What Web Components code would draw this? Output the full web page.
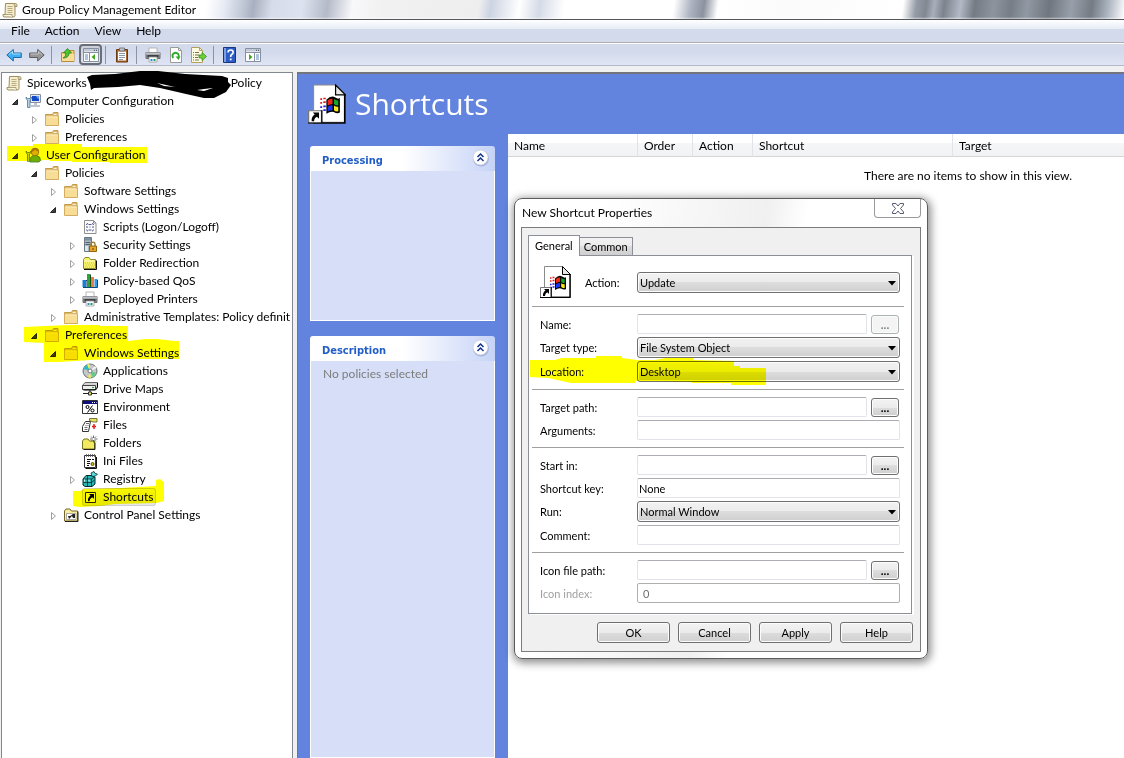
<!DOCTYPE html>
<html lang="en">
<head>
<meta charset="utf-8">
<title>Group Policy Management Editor</title>
<style>
html, body {
  height: 100%;
}
body {
  margin: 0;
  overflow: hidden;
  position: relative;
  background: #f0f0f0;
  color: #000;
  font-family: Lato, "Open Sans", sans-serif;
  font-size: 12px;
  line-height: 18px;
}
</style>
</head>
<body>
<policy-editor></policy-editor>
<shortcut-dialog></shortcut-dialog>
<pen-marks></pen-marks>

<script>
// 16x16 unless a viewBox is given
const FOLDER = `
  <path d="M1.500 3.500h7l1-2h4.500v12h-12.500z" fill="#f0cd78" stroke="#c39a48"/>
  <path d="M9.500 2.500h3.500v2h-4z" fill="#fff6d8" stroke="#c9a557" stroke-width=".6"/>
  <path d="M1.500 5h13v9.500h-13z" fill="#f7dd95" stroke="#d3ad62"/>
  <path d="M2.500 6h11" stroke="#fdf0c4"/>`;

const PRINTER = `
  <path d="M4 1h8v5h-8z" fill="#fff" stroke="#a8a8a8" stroke-width=".8"/>
  <path d="M1 5.500h14v6h-14z" fill="#8c8f94" stroke="#6b6d70"/>
  <path d="M1 5.500h14v2h-14z" fill="#bfc1c4"/>
  <path d="M2.500 8h11v2.500h-11z" fill="#3e4044"/>
  <path d="M4 10h8v5h-8z" fill="#fff" stroke="#999" stroke-width=".8"/>
  <path d="M5.500 12h2v2h-2z" fill="#2b8fd6"/><path d="M8.500 12h2v2h-2z" fill="#1c9a58"/>`;

const SCROLL = `
  <path d="M3.500 1.500h10q2 0 1.500 3h-2v9q0 1.500-2 1.500h-9q-1.500-.5-1-2.500h2z" fill="#f5edcb" stroke="#9c8f66"/>
  <path d="M13 1.500q-1.500 1-.5 3h2.500" fill="#d8caa0" stroke="#9c8f66" stroke-width=".8"/>
  <path d="M1.500 12.500h8.500q-.5 2 1 2.500" fill="#fffbe6" stroke="#9c8f66" stroke-width=".8"/>
  <path d="M5.500 4.500h5M5.500 6.500h5M5.500 8.500h5M5.500 10.500h5" stroke="#a89a72" stroke-width=".8"/>`;

const ICONS = {
  scroll: SCROLL,
  folder: FOLDER,
  printer: PRINTER,
  computer: `
    <path d="M5.500 1.500h10v8h-10z" fill="#e4e7ec" stroke="#8a919e"/>
    <path d="M7 3h7v5h-7z" fill="#1449c8"/><path d="M11 3h3v3q-2 0-3-3z" fill="#6d9bf0"/>
    <path d="M9 10h3v2h3v2h-9v-2h3z" fill="#bcc3d2"/>
    <path d="M1 4q0 3 1.500 3v7.500h2.500v-7.500q1.500 0 1.500-3l-1.500 1.500h-2.500z" fill="#b7d3ea" stroke="#4d7698" stroke-width=".8"/>`,
  user: `
    <path d="M5 15q-.5-6 4-6.500h2.500q4 .5 4 5l-1.500 1.500z" fill="#6fae2c" stroke="#3f7a18" stroke-width=".8"/>
    <circle cx="10" cy="5" r="3.800" fill="#e0b05c" stroke="#96682a" stroke-width=".8"/>
    <path d="M6.200 5q0-4 4-4 3.500 0 3.800 3.500-3-.5-4-2-1 2-3.800 2.500z" fill="#a87322"/>
    <path d="M1 4q0 3 1.500 3v7.500h2v-7.500q1.500 0 1.500-3l-1.500 1.500h-2z" fill="#c9cfb0" stroke="#6a7448" stroke-width=".8"/>`,
  script: `
    <path d="M2.500 1.500h9l2.500 2.500v10.500h-11.500z" fill="#fbfbfb" stroke="#8e8e8e"/>
    <path d="M11.500 1.500v2.500h2.500" fill="none" stroke="#8e8e8e"/>
    <path d="M6 4.500q-1.500 0-1.500 1.500M10 4.500q1.500 0 1.500 1.500M4 8h2M7.500 8h1M10 8h2M6 12q-1.500 0-1.500-1.500M10 12q1.500 0 1.500-1.500M6.500 5.500h3M6.500 11h3" fill="none" stroke="#51548a"/>`,
  security: `
    <path d="M2.500.5h7v14h-7z" fill="#aab6c2" stroke="#6c7884"/>
    <path d="M3 1h6v2.500h-6z" fill="#7f909e"/><path d="M3.500 5.500h5M3.500 7.500h5" stroke="#55636f"/><path d="M3 9h3v5h-3z" fill="#dbe5ec"/>
    <path d="M9 9v-2q0-1.800 2-1.800t2 1.800v2" fill="none" stroke="#9a8338" stroke-width="1.400"/>
    <path d="M7.500 9h7v5.500h-7z" fill="#e3a52c" stroke="#96640d"/><path d="M10.500 11h1v2h-1z" fill="#6b4403"/>`,
  redirect: `
    <path d="M1.500 4.500l1.500-2h4l1.500 2h5v9h-12z" fill="#f6f06a" stroke="#8a8a30"/>
    <path d="M2 6h11" stroke="#fffcc0"/>
    <path d="M3 8h1m1 0h1m1 0h1m1 0h1m1 0h1M4 10h1m1 0h1m1 0h1m1 0h1m1 0h1M3 12h1m1 0h1m1 0h1m1 0h1m1 0h1" stroke="#cfc640"/>
    <path d="M2 14.500h12.500v-9" fill="none" stroke="#111"/>`,
  qos: `
    <path d="M.500 7h3.500v7h-3.500z" fill="#1a7ed8"/><path d="M4 7.500h1v7h-4" fill="none" stroke="#0a3c6c"/>
    <path d="M5 1h3v13h-3z" fill="#2ea33a"/><path d="M8.500 1.500v13" stroke="#125318"/>
    <path d="M9 4h3v10h-3z" fill="#ef7a4a"/>
    <path d="M12.500 6h3v8h-3z" fill="#2a9be6"/><path d="M15.500 7v7.500h-14" fill="none" stroke="#0b4a7c"/>`,
  cd: `
    <circle cx="8" cy="8" r="7" fill="#c4c8cb" stroke="#6c7072"/>
    <path d="M8 8l-6.500-2q1-3.500 4-4.500z" fill="#29bcc0"/><path d="M8 8l-3-6.500 2.500-.5z" fill="#f5ef5a"/>
    <path d="M8 8l6.500 2q-1 3.500-4 4.500z" fill="#66c88f"/><path d="M8 8l1 7-3-.5z" fill="#f2e758"/><path d="M8 8l6.500-3-1.500-2z" fill="#f6f6f6"/>
    <circle cx="8" cy="8" r="2" fill="#fff" stroke="#777"/>`,
  drive: `
    <path d="M.500 4.500l2.500-3h12.500v4l-2 3h-13z" fill="#d4d4d4" stroke="#666"/>
    <path d="M.500 4.500h13v4h-13z" fill="#eee" stroke="#444"/><path d="M10 6.500h2" stroke="#18b018"/>
    <path d="M15.500 2v4.500l-2 2.500h-12" fill="none" stroke="#000"/>
    <path d="M8 9v3M1 12.500h14" stroke="#222"/><path d="M6.500 11h3v3h-3z" fill="#efe63c" stroke="#333"/>`,
  environment: `
    <path d="M.500 1.500h15v13h-15z" fill="#fff" stroke="#333"/>
    <path d="M1 2h14v3h-14z" fill="#10107c"/><path d="M10 3.500h1m1 0h1m1 0h.5" stroke="#fff"/>
    <circle cx="5.500" cy="8" r="1.500" fill="none" stroke="#000"/><circle cx="10.500" cy="11.500" r="1.500" fill="none" stroke="#000"/><path d="M10.500 6.500l-5 7" stroke="#000"/>`,
  files: `
    <path d="M.500 14.500v-5l3-5h5l-2 10z" fill="#fff" stroke="#333"/>
    <path d="M4 6.500h3M3.500 8.500h1m1 0h1M2.500 10.500h3M2.500 12.500h3" stroke="#444" stroke-width=".8"/>
    <path d="M7.500 1.500h7.500v3.500h-4l-3.500-1.500z" fill="#e9e06a" stroke="#55551a" stroke-width=".8"/>
    <path d="M12 7v5M10 9.500h4" stroke="#e01818" stroke-width="1.400"/>`,
  folders: `
    <path d="M.500 6l1.500-2h4l1.500 2h5v8h-12z" fill="#f3ea62" stroke="#77771c"/>
    <path d="M1.500 14.500h11.500v-7" fill="none" stroke="#222"/>
    <path d="M11.500.5v7M8 4h7.500M9 1.500l5 5M14 1.500l-5 5" stroke="#444" stroke-width=".8"/><path d="M10.500 3h2v2h-2z" fill="#fff"/>`,
  ini: `
    <path d="M2.500 2.500h11v12h-11z" fill="#fff" stroke="#333"/>
    <path d="M4.500 1v3M6.500 1v3M8.500 1v3M10.500 1v3M12.500 1v3" stroke="#555" stroke-width=".8"/>
    <path d="M5 6.500h4m1 0h2M5 8.500h3M5 10.500h3M5 12.500h2" stroke="#111"/><circle cx="10.500" cy="11" r="1.500" fill="#c9b624" stroke="#5c5108"/>
    <path d="M14.500 4v11.500h-11" fill="none" stroke="#111"/>`,
  registry: `
    <path d="M1 8l3-3.500h5l4 1.500v7l-3 2.500h-7l-2-1.500z" fill="#28b5b5" stroke="#042c2c"/>
    <path d="M1.500 8h8v7M9.500 8l3-2M5.500 5v10M1.500 11.500h8l3-2.500" fill="none" stroke="#042c2c" stroke-width=".8"/>
    <path d="M9 2l3-1.500 1 2 2.500.5-2 2-3.500.5z" fill="#5fe0e0" stroke="#042c2c" stroke-width=".8"/><path d="M2 8.500h1v2h-1M6.500 8.500h1v2h-1" fill="#d9ffff"/>`,
  shortcut: `
    <path d="M3.500 3.500h10v10h-10z" fill="#fff" stroke="#222"/>
    <path d="M7 5h5v5l-1.700-1.700q-2.800 1.500-2.800 4h-1.500q-.5-3.500 2.500-5.800z" fill="#000"/>`,
  control: `
    <path d="M1.500 4l1.500-2h4l1.500 2h6v10h-13z" fill="#f6eea0" stroke="#77662a"/>
    <path d="M3.500 6.500h9.500v6h-9.500z" fill="#fff" stroke="#999" stroke-width=".8"/><path d="M5 9h2l3-2h2v4h-2l-1-2-3 3z" fill="#222"/><path d="M8 8h1v1h-1z" fill="#d22"/>
    <path d="M2 14.500h13v-10" fill="none" stroke="#222"/>`,
  back: `<path d="M.800 8l6.500-5.500v3.500h8v4.500h-8v3.500z" fill="#3eaef0" stroke="#1b6cae" stroke-linejoin="round"/><path d="M3 7.500l3.500-3v2.500h8" fill="none" stroke="#a5dcfb"/>`,
  forward: `<path d="M15.200 8l-6.500-5.500v3.500h-8v4.500h8v3.500z" fill="#979797" stroke="#5c5c5c" stroke-linejoin="round"/><path d="M1.500 7h8v-2.500l3.500 3" fill="none" stroke="#c6c6c6"/>`,
  up: `
    <path d="M1.500 5.500h5l1-2h6.500v11h-12.500z" fill="#f3cf7a" stroke="#b78d3c"/><path d="M2 7h12v7h-12z" fill="#f9de97"/>
    <path d="M3 11q3-1 3-5h-2.500l4-4.500 4 4.500h-2.500q0 5-6 5z" fill="#4fc72c" stroke="#23821a" stroke-width=".8"/>`,
  pane: `
    <path d="M.500 1.500h15v13h-15z" fill="#fff" stroke="#8590a0"/><path d="M1 2h14v2.500h-14z" fill="#c3cad6"/><path d="M11 3.300h1m1 0h1" stroke="#3c4a5e"/>
    <path d="M1 5.500h14M6.500 6v8.500" stroke="#8590a0"/><path d="M2 8h3M2 10h3M2 12h3" stroke="#5f87c0"/><path d="M12 7v6l-3.500-3z" fill="#42a822"/>`,
  pane2: `
    <path d="M.500 1.500h15v13h-15z" fill="#fff" stroke="#8590a0"/><path d="M1 2h14v2.500h-14z" fill="#c3cad6"/><path d="M11 3.300h1m1 0h1" stroke="#3c4a5e"/>
    <path d="M1 5.500h14M9.500 6v8.500" stroke="#8590a0"/><path d="M11 8h3M11 10h3M11 12h3" stroke="#5f87c0"/><path d="M4 7v6l3.500-3z" fill="#42a822"/>`,
  clipboard: `
    <path d="M2.500 2.500h11v12.500h-11z" fill="#a8642a" stroke="#6c3a10"/><path d="M4 4.500h8v9h-8z" fill="#fff"/>
    <path d="M5.500 1h5v3h-5z" fill="#c0c4c8" stroke="#666" stroke-width=".8"/><path d="M5 6.500h6M5 8.500h6M5 10.500h6M5 12.500h4" stroke="#8c98a8"/>`,
  refresh: `
    <path d="M2.500.5h8l3 3v12h-11z" fill="#fff" stroke="#9a9a9a"/><path d="M10.500.5v3h3" fill="none" stroke="#9a9a9a"/>
    <path d="M5.300 11q-1.800-2.500.2-4.500 2.500-1.700 4.700.5.800 1.200.5 3" fill="none" stroke="#2fa82c" stroke-width="1.800"/><path d="M7.500 9.500h5l-2 3.500z" fill="#2fa82c"/>`,
  export: `
    <path d="M.500.5h8l3 3v12h-11z" fill="#fffbe2" stroke="#b3a05c"/><path d="M8.500.5v3h3" fill="none" stroke="#b3a05c"/>
    <path d="M2 5.500h1m1 0h4M2 8h1m1 0h4M2 10.500h1m1 0h3M2 13h1m1 0h4" stroke="#77715a"/><path d="M8 8h3v-2.500l4.500 4-4.500 4v-2.500h-3z" fill="#6fd03c" stroke="#2c9018" stroke-width=".8"/>`,
  help: `
    <path d="M1.500.5h12v15h-12z" fill="#2d5cc4" stroke="#18367c"/><path d="M2 1h2v14h-2z" fill="#7f9fe0"/>
    <path d="M6 5.500q0-2.500 2.700-2.500 2.500 0 2.500 2.300 0 1.400-1.500 2.200-1 .6-1 1.800v.7" fill="none" stroke="#fff" stroke-width="1.600"/><path d="M7.800 11.500h1.800v1.800h-1.800z" fill="#fff"/>`,
  document: `
    <path d="M4.500.5h18l8 8v22.500h-26z" fill="#fff" stroke="#8a8a8a"/>
    <path d="M30 8v23.500h-26" fill="none" stroke="#000" stroke-width="1.400"/>
    <path d="M22.500.5v8h8z" fill="#e8e8e8" stroke="#000"/>
    <path d="M10 12h1.500M10 15h1.500M12.500 11.500h2M12.500 14.500h2" stroke="#e02020" stroke-width="1.400"/><path d="M10 18.500h1.500M10 21.500h1.500M12.500 18h2M12.500 21h2" stroke="#2020e0" stroke-width="1.400"/>
    <path d="M15 12.500q4-4 7-2t4 .5v12q-2 1.400-5-.5-2.500-.8-6 1.500z" fill="#000"/>
    <path d="M16 13q2-1.700 4-1.300v4.300q-2 0-4 1.300z" fill="#f02818"/><path d="M21.200 12q2 1.500 3.500 1v4q-2 .5-3.500-1z" fill="#18a828"/>
    <path d="M16 18.200q2-1.500 4-1.200v4q-2 0-4 1.200z" fill="#1838f0"/><path d="M21.200 17.200q2 1.300 3.500 1v3.800q-2 .5-3.500-1z" fill="#f8e818"/>
    <path d="M.500 21.500h10.500v10h-10.500z" fill="#fff" stroke="#777"/><path d="M11.300 21v10.500h-11.300" fill="none" stroke="#000"/>
    <path d="M4 23h5v5l-1.700-1.700q-2.300 1-2.300 3.700h-2q-.5-3.500 2.500-5.500z" fill="#000"/>`
};

class GpIcon extends HTMLElement {
  constructor() {
    super();
    this.attachShadow({ mode: 'open' });
  }

  connectedCallback() {
    const name = this.getAttribute('name');
    const box = name === 'document' ? '0 0 31 32' : '0 0 16 16';
    this.shadowRoot.innerHTML = `
      <style>
        :host { display: block; flex: none; width: 16px; height: 16px; }
        svg { display: block; width: 100%; height: 100%; }
      </style>
      <svg viewBox="${box}" aria-hidden="true">${ICONS[name]}</svg>
    `;
  }
}
customElements.define('gp-icon', GpIcon);

class TitleBar extends HTMLElement {
  constructor() {
    super();
    this.attachShadow({ mode: 'open' });
    this.shadowRoot.innerHTML = `
      <style>
        :host {
          display: flex;
          align-items: center;
          gap: 4px;
          height: 19px;
          padding-left: 2px;
          border-bottom: 1px solid #55555c;
          /* blurred desktop showing through the glass */
          background:
            linear-gradient(#fff0 17px, #ffffff90 19px),
            linear-gradient(98deg, #fff 0, #fff 205px, #e8ecf5 222px, #c3cad8 240px, #a9b0bf 252px, #d6dce9 270px,
              #dce2ee 300px, #b4bac8 325px, #f8f8fb 350px, #f1f1f1 380px, #eeeeee 475px, #ccd3e2 487px, #fff 515px,
              #d5dbe7 535px, #fff 560px, #fff 668px, #adb4c2 685px, #8c929e 698px, #fff 712px, #fbfbfb 780px, #fff 895px,
              #959ca7 908px, #818892 918px, #a7afbb 926px, #7c838d 936px, #b2bac6 952px, #747b84 966px, #8c949e 985px,
              #767d86 1002px, #9098a3 1018px, #70767e 1040px, #979faa 1062px, #747b84 1082px, #aab3bf 1098px, #fff 1116px);
        }
        h1 { margin: 0; font-size: 12px; font-weight: normal; line-height: 18px; }
      </style>
      <gp-icon name="scroll"></gp-icon>
      <h1><slot></slot></h1>
    `;
  }
}
customElements.define('title-bar', TitleBar);

class MenuBar extends HTMLElement {
  constructor() {
    super();
    this.attachShadow({ mode: 'open' });
    this.shadowRoot.innerHTML = `
      <style>
        :host {
          display: flex;
          height: 22px;
          padding-left: 3px;
          border-bottom: 1px solid #b0aeb2;
          background: linear-gradient(#fff 0, #e6ecf5 9px, #d3daec 9px);
        }
        button {
          border: 0;
          padding: 0 7px 0 8px;
          background: none;
          font: inherit;
          color: inherit;
        }
      </style>
      <button type="button">File</button>
      <button type="button">Action</button>
      <button type="button">View</button>
      <button type="button">Help</button>
    `;
  }
}
customElements.define('menu-bar', MenuBar);

class ToolBar extends HTMLElement {
  constructor() {
    super();
    this.attachShadow({ mode: 'open' });
    const groups = [
      [['back', 'Back'], ['forward', 'Forward']],
      [['up', 'Up one level'], ['pane', 'Show/Hide Console Tree', true]],
      [['clipboard', 'Paste']],
      [['printer', 'Print'], ['refresh', 'Refresh'], ['export', 'Export List']],
      [['help', 'Help'], ['pane2', 'Show/Hide Action Pane']]
    ];
    this.shadowRoot.innerHTML = `
      <style>
        :host {
          display: flex;
          align-items: center;
          height: 21px;
          padding-left: 2px;
          border-top: 1px solid #fff;
          border-bottom: 1px solid #b3b8ca;
          background: linear-gradient(#d3daec 40%, #dfe5f4);
        }
        button {
          box-sizing: border-box;
          display: flex;
          align-items: center;
          justify-content: center;
          width: 23px;
          height: 21px;
          padding: 0;
          border: 1px solid transparent;
          border-radius: 4px;
          background: none;
        }
        button[aria-pressed] {
          border: 2px solid #6a6e78;
          background: linear-gradient(#c9ced9, #e4e8f0);
        }
        i { width: 1px; height: 18px; margin: 0 4px 0 3px; background: #8d93a3; }
      </style>
      ${groups.map(g => g.map(([icon, label, on]) => `
        <button type="button" aria-label="${label}"${on ? ' aria-pressed="true"' : ''}><gp-icon name="${icon}"></gp-icon></button>
      `).join('')).join('<i></i>')}
    `;
  }
}
customElements.define('tool-bar', ToolBar);

class TreeNode extends HTMLElement {
  constructor() {
    super();
    this.attachShadow({ mode: 'open' });
  }

  connectedCallback() {
    const level = Number(this.getAttribute('level'));
    const state = this.getAttribute('state');
    let arrow = '';
    if (state === 'open') arrow = '<path d="M8.500 6.500v5h-5z" fill="#404040" stroke="#262626"/>';
    if (state === 'closed') arrow = '<path d="M4.500 5.500l4 3.500-4 3.500z" fill="#fff" stroke="#a0a0a0"/>';
    this.shadowRoot.innerHTML = `
      <style>
        :host {
          display: flex;
          align-items: center;
          height: 18px;
          padding-left: ${level ? level * 19 - 12 : 4}px;
          white-space: nowrap;
        }
        svg { flex: none; width: 16px; height: 16px; }
        .item { display: flex; align-items: center; gap: 5px; height: 18px; }
        :host([selected]) .item {
          padding-right: 3px;
          border-radius: 3px;
          background: linear-gradient(#f8f8f8, #e5e5e5);
          box-shadow: inset 0 0 0 1px #d0d0d0;
        }
      </style>
      ${level ? `<svg viewBox="0 0 16 16" aria-hidden="true">${arrow}</svg>` : ''}
      <span class="item"><gp-icon name="${this.getAttribute('icon')}"></gp-icon><span><slot></slot></span></span>
    `;
  }
}
customElements.define('tree-node', TreeNode);

class ConsoleTree extends HTMLElement {
  constructor() {
    super();
    this.attachShadow({ mode: 'open' });
    const nodes = [
      [1, 'open', 'computer', 'Computer Configuration'],
      [2, 'closed', 'folder', 'Policies'],
      [2, 'closed', 'folder', 'Preferences'],
      [1, 'open', 'user', 'User Configuration'],
      [2, 'open', 'folder', 'Policies'],
      [3, 'closed', 'folder', 'Software Settings'],
      [3, 'open', 'folder', 'Windows Settings'],
      [4, '', 'script', 'Scripts (Logon/Logoff)'],
      [4, 'closed', 'security', 'Security Settings'],
      [4, 'closed', 'redirect', 'Folder Redirection'],
      [4, 'closed', 'qos', 'Policy-based QoS'],
      [4, 'closed', 'printer', 'Deployed Printers'],
      [3, 'closed', 'folder', 'Administrative Templates: Policy definit'],
      [2, 'open', 'folder', 'Preferences'],
      [3, 'open', 'folder', 'Windows Settings'],
      [4, '', 'cd', 'Applications'],
      [4, '', 'drive', 'Drive Maps'],
      [4, '', 'environment', 'Environment'],
      [4, '', 'files', 'Files'],
      [4, '', 'folders', 'Folders'],
      [4, '', 'ini', 'Ini Files'],
      [4, 'closed', 'registry', 'Registry'],
      [4, '', 'shortcut', 'Shortcuts'],
      [3, 'closed', 'control', 'Control Panel Settings']
    ];
    this.shadowRoot.innerHTML = `
      <style>
        :host {
          display: block;
          overflow: hidden;
          padding-top: 1px;
          border: 1px solid #828790;
          border-bottom: 0;
          background: #fff;
        }
        .gap { display: inline-block; width: 144px; }
      </style>
      <tree-node level="0" icon="scroll">Spiceworks<span class="gap"></span>Policy</tree-node>
      ${nodes.map(([level, state, icon, text]) => `
        <tree-node level="${level}" state="${state}" icon="${icon}"${icon === 'shortcut' ? ' selected' : ''}>${text}</tree-node>
      `).join('')}
    `;
  }
}
customElements.define('console-tree', ConsoleTree);

class TaskPanel extends HTMLElement {
  constructor() {
    super();
    this.attachShadow({ mode: 'open' });
    this.shadowRoot.innerHTML = `
      <style>
        :host { display: flex; flex-direction: column; }
        header {
          display: flex;
          justify-content: space-between;
          height: 25px;
          padding: 0 6px 0 12px;
          border-radius: 3px 3px 0 0;
          background: linear-gradient(90deg, #fff 50%, #c6d3f7);
        }
        h3 {
          margin: 6px 0 0;
          color: #215dc6;
          font: bold 11px/18px "DejaVu Sans Condensed", "DejaVu Sans", sans-serif;
        }
        button { width: 17px; height: 17px; margin-top: 3px; padding: 0; border: 0; background: none; }
        svg { display: block; width: 17px; height: 17px; overflow: visible; }
        .body {
          flex: 1;
          padding: 4px 12px;
          border: 1px solid #fff;
          border-top: 0;
          background: #d6dff7;
          color: #7c7c7c;
        }
      </style>
      <header>
        <h3></h3>
        <button type="button" aria-label="Collapse">
          <svg viewBox="0 0 17 17">
            <circle cx="9" cy="9.500" r="8" fill="#8f9cc4" opacity=".6"/>
            <circle cx="8.500" cy="8.500" r="7.500" fill="#fff" stroke="#b8c2dc" stroke-width=".6"/>
            <path d="M5.500 8l3-3 3 3M5.500 12l3-3 3 3" fill="none" stroke="#12348c" stroke-width="1.500"/>
          </svg>
        </button>
      </header>
      <div class="body"><slot></slot></div>
    `;
  }

  connectedCallback() {
    this.shadowRoot.querySelector('h3').textContent = this.getAttribute('heading');
  }
}
customElements.define('task-panel', TaskPanel);

class ItemList extends HTMLElement {
  constructor() {
    super();
    this.attachShadow({ mode: 'open' });
    this.shadowRoot.innerHTML = `
      <style>
        :host { display: block; background: #fff; }
        table { width: 100%; border-collapse: separate; border-spacing: 0; table-layout: fixed; }
        th {
          box-sizing: border-box;
          height: 23px;
          padding: 2px 0 0 6px;
          border-right: 1px solid #e0e3e8;
          border-bottom: 1px solid #d5d5d5;
          background: linear-gradient(#fff 40%, #f5f6f8 40%, #f1f2f4);
          font-weight: normal;
          text-align: left;
        }
        th:last-child { border-right: 0; }
        td { padding: 10px 0 0 356px; white-space: nowrap; }
      </style>
      <table>
        <colgroup><col style="width:130px"><col style="width:55px"><col style="width:60px"><col style="width:200px"><col></colgroup>
        <thead><tr><th>Name</th><th>Order</th><th>Action</th><th>Shortcut</th><th>Target</th></tr></thead>
        <tbody><tr><td colspan="5">There are no items to show in this view.</td></tr></tbody>
      </table>
    `;
  }
}
customElements.define('item-list', ItemList);

class ShortcutsView extends HTMLElement {
  constructor() {
    super();
    this.attachShadow({ mode: 'open' });
    this.shadowRoot.innerHTML = `
      <style>
        :host {
          display: flex;
          flex-direction: column;
          border-top: 2px solid #74757c;
          border-left: 1px solid #74757c;
          background: #6284de;
        }
        header { display: flex; align-items: center; gap: 9px; height: 60px; padding-left: 10px; }
        header gp-icon { width: 38px; height: 40px; }
        h2 { margin: 0; color: #fff; font-family: "Open Sans", sans-serif; font-size: 30px; font-weight: normal; line-height: 40px; }
        main { display: flex; flex: 1; gap: 13px; min-height: 0; padding-left: 12px; }
        aside { display: flex; flex-direction: column; gap: 15px; width: 185px; padding-top: 12px; }
        .processing { height: 175px; }
        .description { flex: 1; }
        item-list { flex: 1; }
      </style>
      <header><gp-icon name="document"></gp-icon><h2>Shortcuts</h2></header>
      <main>
        <aside>
          <task-panel class="processing" heading="Processing"></task-panel>
          <task-panel class="description" heading="Description">No policies selected</task-panel>
        </aside>
        <item-list></item-list>
      </main>
    `;
  }
}
customElements.define('shortcuts-view', ShortcutsView);

class PolicyEditor extends HTMLElement {
  constructor() {
    super();
    this.attachShadow({ mode: 'open' });
    this.shadowRoot.innerHTML = `
      <style>
        :host { display: flex; flex-direction: column; height: 100%; }
        .work {
          display: grid;
          grid-template-columns: 292px 1fr;
          gap: 4px;
          flex: 1;
          min-height: 0;
          padding: 6px 0 0 1px;
        }
      </style>
      <title-bar>Group Policy Management Editor</title-bar>
      <menu-bar></menu-bar>
      <tool-bar></tool-bar>
      <div class="work">
        <console-tree></console-tree>
        <shortcuts-view></shortcuts-view>
      </div>
    `;
  }
}
customElements.define('policy-editor', PolicyEditor);

class PushButton extends HTMLElement {
  constructor() {
    super();
    this.attachShadow({ mode: 'open' });
    this.shadowRoot.innerHTML = `
      <style>
        :host { display: block; }
        button {
          box-sizing: border-box;
          display: block;
          width: 100%;
          height: 100%;
          padding: 0;
          border: 1px solid #707070;
          border-radius: 3px;
          background: linear-gradient(#f3f3f3, #ebebeb 50%, #dddddd 50%, #cfcfcf);
          box-shadow: inset 0 0 0 1px #fcfcfc;
          font: inherit;
          color: inherit;
        }
        button:disabled { border-color: #adb2b5; background: #f4f4f4; color: #838383; }
      </style>
      <button type="button"><slot></slot></button>
    `;
  }

  connectedCallback() {
    const button = this.shadowRoot.querySelector('button');
    button.disabled = this.hasAttribute('disabled');
    if (this.hasAttribute('label')) button.setAttribute('aria-label', this.getAttribute('label'));
  }
}
customElements.define('push-button', PushButton);

class FormField extends HTMLElement {
  constructor() {
    super();
    this.attachShadow({ mode: 'open' });
  }

  connectedCallback() {
    const label = this.getAttribute('label');
    const value = this.getAttribute('value') || '';
    const browse = this.getAttribute('browse');
    const disabled = this.hasAttribute('disabled') ? ' disabled' : '';
    const control = this.getAttribute('type') === 'select'
      ? `<span class="select">
           <select id="control"><option>${value}</option></select>
           <svg viewBox="0 0 8 5" aria-hidden="true"><path d="M0 0h8l-4 4.500z"/></svg>
         </span>`
      : `<input id="control" type="text" value="${value}"${disabled}>`;
    this.shadowRoot.innerHTML = `
      <style>
        :host {
          display: grid;
          grid-template-columns: 97px 1fr;
          align-items: center;
        }
        :host([disabled]) label { color: #a0a0a0; }
        .name { display: flex; align-items: center; gap: 14px; }
        .value { display: flex; align-items: center; gap: 4px; }
        input, select {
          box-sizing: border-box;
          width: 100%;
          min-width: 0;
          margin: 0;
          font: inherit;
          color: inherit;
        }
        input {
          flex: 1;
          height: 20px;
          padding: 0 1px;
          border: 1px solid #e2e3ea;
          border-top-color: #abadb3;
          border-radius: 2px;
          background: #fff;
        }
        input:disabled { padding-left: 5px; border-color: #afafaf; color: #6d6d6d; }
        .select { position: relative; flex: 1; height: 21px; }
        select {
          display: block;
          height: 21px;
          padding: 0 20px 0 2px;
          border: 1px solid #707070;
          border-radius: 3px;
          appearance: none;
          background: linear-gradient(#f2f2f2, #ebebeb 50%, #dddddd 50%, #cfcfcf);
          box-shadow: inset 0 0 0 1px #fcfcfc;
        }
        .select svg { position: absolute; right: 4px; top: 9px; width: 8px; height: 5px; }
        push-button { width: 28px; height: 19px; margin-right: 1px; font-size: 12px; font-weight: bold; }
      </style>
      <div class="name"><slot name="icon"></slot><label for="control">${label}</label></div>
      <div class="value">
        ${control}
        ${browse ? `<push-button label="Browse"${browse === 'off' ? ' disabled' : ''}>...</push-button>` : ''}
      </div>
    `;
  }
}
customElements.define('form-field', FormField);

class ShortcutDialog extends HTMLElement {
  constructor() {
    super();
    this.attachShadow({ mode: 'open' });
    this.shadowRoot.innerHTML = `
      <style>
        :host {
          position: absolute;
          left: 514px;
          top: 198px;
          box-sizing: border-box;
          width: 414px;
          padding: 0 6px 6px;
          border: 1px solid #5c5c5c;
          border-radius: 8px;
          background: linear-gradient(100deg, #fff 90px, #f0f0f0 250px, #fff 290px);
          box-shadow: 1px 2px 8px 2px #00000070;
          font-size: 11px;
          line-height: 13px;
        }
        header { display: flex; justify-content: space-between; height: 28px; }
        h2 {
          margin: 5px 0 0 1px;
          font-size: 12px;
          font-weight: normal;
          line-height: 18px;
        }
        .close {
          box-sizing: border-box;
          width: 47px;
          height: 19px;
          padding: 0;
          border: 1px solid #9a9a9a;
          border-top: 0;
          border-radius: 0 0 4px 4px;
          background: #fff;
        }
        .close svg { display: block; width: 12px; height: 11px; margin: 0 auto; }
        .frame { padding: 7px 7px 8px 6px; border: 1px solid #7c7c7c; background: #f0f0f0; }
        [role=tablist] { display: flex; align-items: flex-end; }
        [role=tab] {
          box-sizing: border-box;
          height: 18px;
          padding: 0 4px;
          border: 1px solid #8c8e98;
          border-left: 0;
          border-bottom: 0;
          background: linear-gradient(#f2f2f2, #ebebeb 50%, #dddddd 50%, #cfcfcf);
          font: inherit;
          color: inherit;
        }
        [aria-selected=true] {
          position: relative;
          height: 21px;
          margin-bottom: -1px;
          padding: 0 6px 2px;
          border-left: 1px solid #8c8e98;
          background: #fff;
        }
        [role=tabpanel] {
          padding: 0 7px 10px 3px;
          margin-right: 1px;
          border: 1px solid #8c8e98;
          background: #fff;
          box-shadow: 2px 1px 0 #fff;
        }
        section {
          display: flex;
          flex-direction: column;
          gap: 3px;
          padding: 7px 4px 7px 8px;
          border-bottom: 1px solid #a0a0a0;
        }
        section:last-child { padding-bottom: 0; border-bottom: 0; }
        .action { padding-top: 10px; padding-bottom: 8px; }
        .action gp-icon { width: 31px; height: 32px; }
        footer { display: grid; grid-template-columns: repeat(4, 73px); justify-content: end; gap: 8px; padding-top: 8px; }
        footer push-button { height: 21px; }
      </style>
      <header>
        <h2>New Shortcut Properties</h2>
        <button class="close" type="button" aria-label="Close">
          <svg viewBox="0 0 12 11"><path d="M.500.500h3.500l2 2.500 2-2.500h3.500v1.500l-3 3.500 3 3.500v1.500h-3.500l-2-2.500-2 2.500h-3.500v-1.500l3-3.500-3-3.500z" fill="#fff" stroke="#555b6e"/></svg>
        </button>
      </header>
      <div class="frame">
        <div role="tablist">
          <button type="button" role="tab" aria-selected="true">General</button>
          <button type="button" role="tab">Common</button>
        </div>
        <div role="tabpanel">
          <section class="action">
            <form-field label="Action:" type="select" value="Update"><gp-icon slot="icon" name="document"></gp-icon></form-field>
          </section>
          <section>
            <form-field label="Name:" browse="off"></form-field>
            <form-field label="Target type:" type="select" value="File System Object"></form-field>
            <form-field label="Location:" type="select" value="Desktop"></form-field>
          </section>
          <section>
            <form-field label="Target path:" browse="on"></form-field>
            <form-field label="Arguments:"></form-field>
          </section>
          <section>
            <form-field label="Start in:" browse="on"></form-field>
            <form-field label="Shortcut key:" value="None"></form-field>
            <form-field label="Run:" type="select" value="Normal Window"></form-field>
            <form-field label="Comment:"></form-field>
          </section>
          <section>
            <form-field label="Icon file path:" browse="on"></form-field>
            <form-field label="Icon index:" value="0" disabled></form-field>
          </section>
        </div>
        <footer>
          <push-button>OK</push-button>
          <push-button>Cancel</push-button>
          <push-button>Apply</push-button>
          <push-button>Help</push-button>
        </footer>
      </div>
    `;
  }
}
customElements.define('shortcut-dialog', ShortcutDialog);

// highlighter and marker strokes over the windows
class PenMarks extends HTMLElement {
  constructor() {
    super();
    this.attachShadow({ mode: 'open' });
    this.shadowRoot.innerHTML = `
      <style>
        :host {
          position: absolute;
          inset: 0;
          overflow: hidden;
          mix-blend-mode: multiply;
          pointer-events: none;
        }
        svg { display: block; width: 1124px; height: 758px; }
      </style>
      <svg viewBox="0 0 1124 758" aria-hidden="true">
        <g fill="#ff0">
          <path d="M7 146H33V144H82V147H147V163H110V162H72V161H50V160H42V161H7z"/>
          <path d="M24 327L45 326 70 325H100V326H128V341L145 339H157L175 341H179V359H112L90 360 60 362H44V343L24 342z"/>
          <path d="M73 491H80L84 489 120 488 156 486V480L160 479 164 482V501L156 503 115 504 100 506 80 507 73 506z"/>
          <path d="M530 360H555L562 358H596V356H622V358L637 360H655L665 358H693V360L734 361V366H740V368H766V385H731V383H692V382L655 381 635 381V383H571L562 381 548 378 530 377z"/>
        </g>
        <path d="M87 77L92 75 115 74 140 71H158L185 74 222 76 228 78 228 82 231 85 226 92 214 98 204 98 186 94 160 88 140 85 118 87 94 88 91 90 90 84z
                 M157 83L166 85 175 87 164 86z M197 90L204 91 213 88 204 89z" fill="#000" fill-rule="evenodd"/>
      </svg>
    `;
  }
}
customElements.define('pen-marks', PenMarks);
</script>
</body>
</html>
